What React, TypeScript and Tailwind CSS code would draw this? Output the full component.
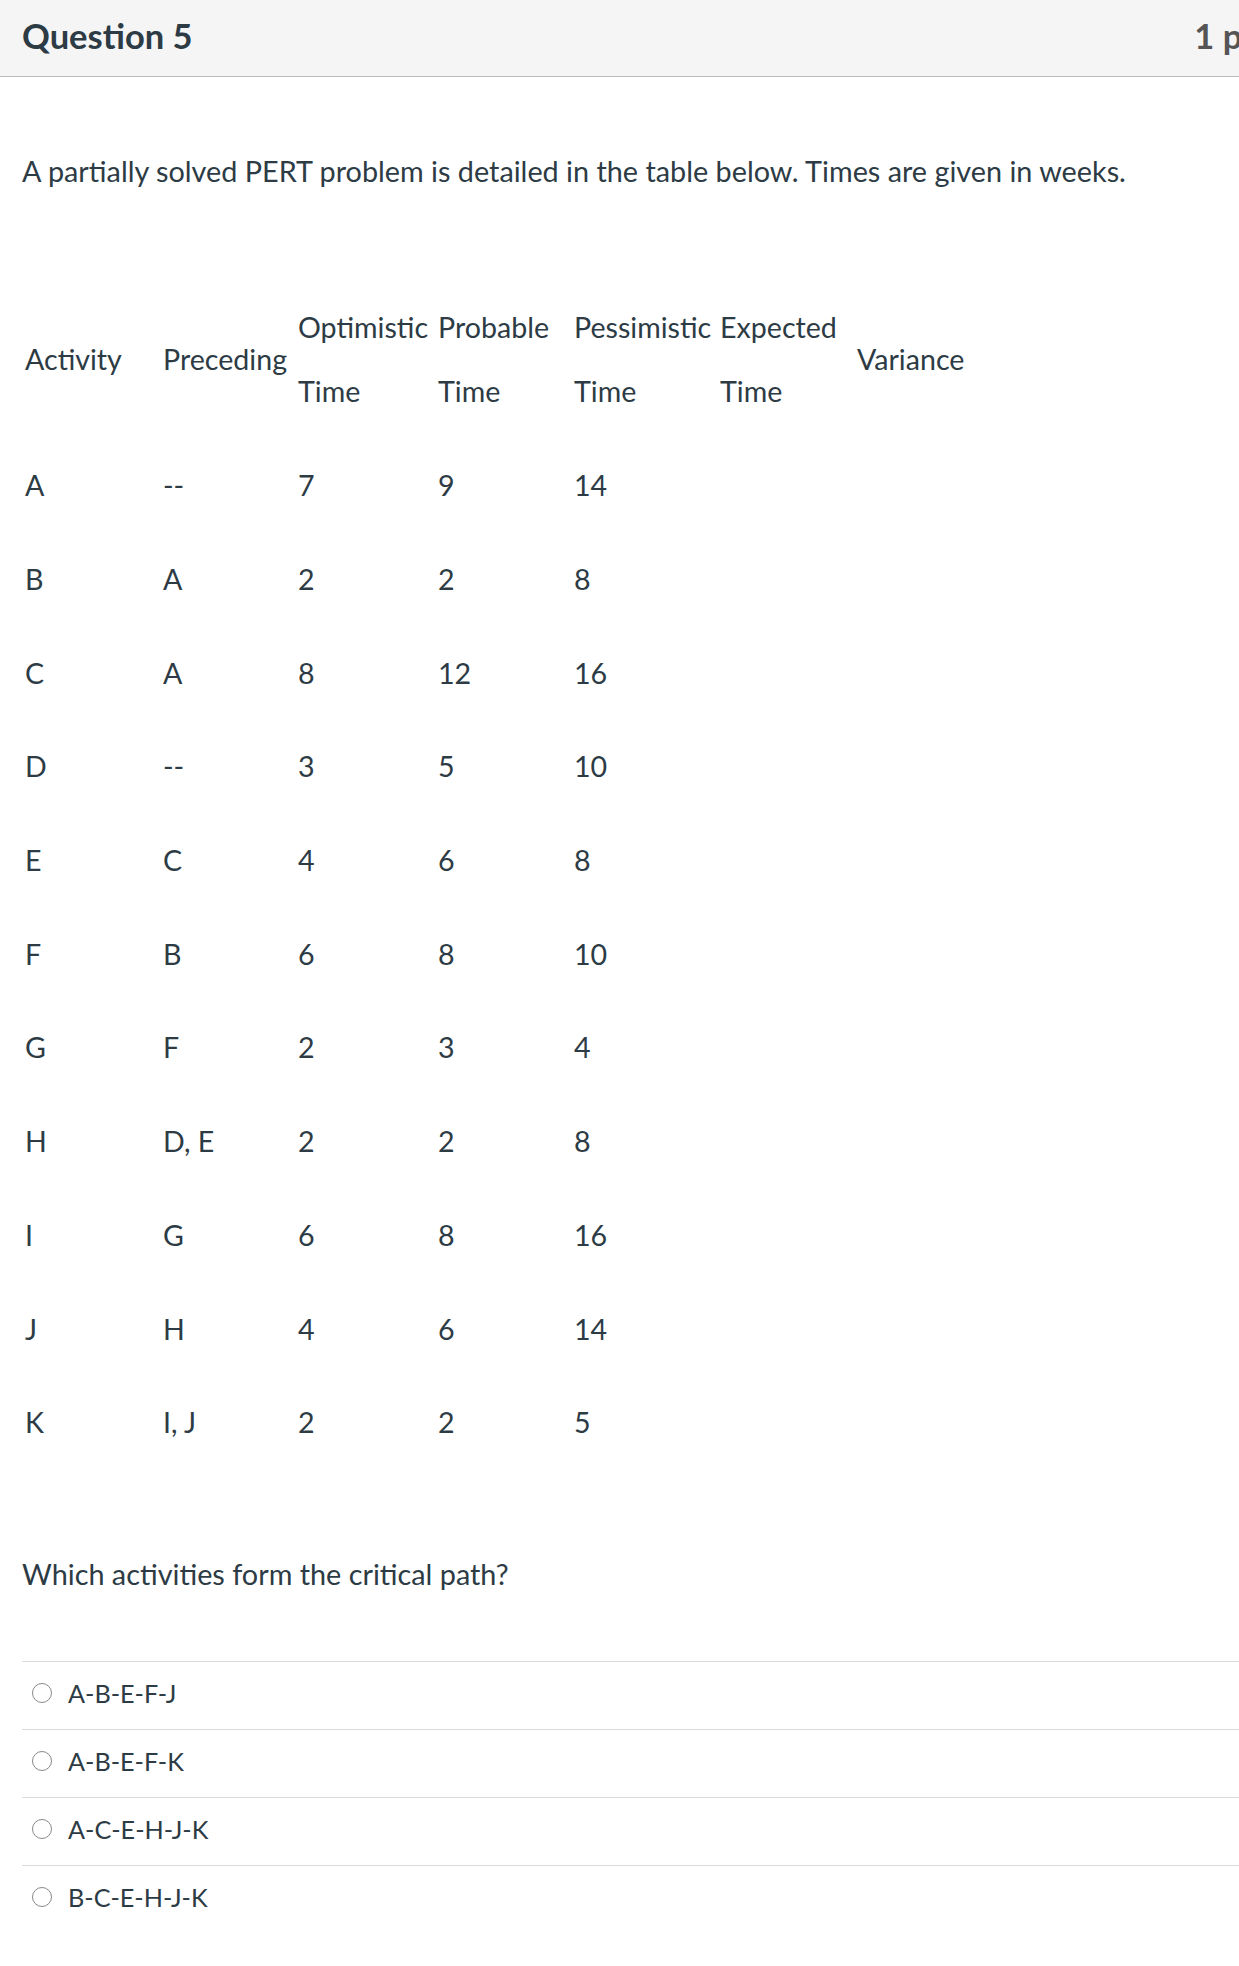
import React from "react";

const rows: string[][] = [
  ["A", "--", "7", "9", "14"],
  ["B", "A", "2", "2", "8"],
  ["C", "A", "8", "12", "16"],
  ["D", "--", "3", "5", "10"],
  ["E", "C", "4", "6", "8"],
  ["F", "B", "6", "8", "10"],
  ["G", "F", "2", "3", "4"],
  ["H", "D, E", "2", "2", "8"],
  ["I", "G", "6", "8", "16"],
  ["J", "H", "4", "6", "14"],
  ["K", "I, J", "2", "2", "5"],
];

const answers = ["A-B-E-F-J", "A-B-E-F-K", "A-C-E-H-J-K", "B-C-E-H-J-K"];

const cols = "grid grid-cols-[138px_135px_140px_136px_146px_137px_160px]";

function Two({ a, b }: { a: string; b: string }) {
  return (
    <div className="flex h-[96px] flex-col justify-between">
      <span className="leading-[32px] whitespace-nowrap">{a}</span>
      <span className="leading-[32px] whitespace-nowrap">{b}</span>
    </div>
  );
}

function One({ a }: { a: string }) {
  return (
    <div className="flex h-[96px] items-center">
      <span className="leading-[32px] whitespace-nowrap">{a}</span>
    </div>
  );
}

export default function App() {
  return (
    <div className="w-[1239px] overflow-hidden bg-white font-['Lato',sans-serif] text-[#2d3b45]">
      <div className="w-[1239px] border-b border-[#b9bdc0] bg-[#f5f5f5]">
        <div className="flex h-[76px] w-[1270px] items-center justify-between pb-[4px] pl-[22px]">
          <span className="text-[34.5px] leading-[40px] font-bold">Question 5</span>
          <span className="text-[34.5px] leading-[40px] font-bold text-[#555555]">1 pts</span>
        </div>
      </div>

      <div className="pl-[22px]">
        <p className="mt-[76px] text-[28.8px] leading-[36px]">
          A partially solved PERT problem is detailed in the table below. Times are given in weeks.
        </p>

        <div className="mt-[122px] pl-[3px] text-[28.6px]">
          <div className={cols}>
            <One a="Activity" />
            <One a="Preceding" />
            <Two a="Optimistic" b="Time" />
            <Two a="Probable" b="Time" />
            <Two a="Pessimistic" b="Time" />
            <Two a="Expected" b="Time" />
            <One a="Variance" />
          </div>
          <div className="mt-[31.5px]">
            {rows.map((r) => (
              <div key={r[0]} className={cols + " h-[93.7px] items-center"}>
                {r.map((c, i) => (
                  <span key={i} className="leading-[32px] whitespace-nowrap">
                    {c}
                  </span>
                ))}
                <span />
                <span />
              </div>
            ))}
          </div>
        </div>

        <p className="mt-[87px] text-[28.8px] leading-[36px]">Which activities form the critical path?</p>

        <div className="mt-[69px]">
          {answers.map((a) => (
            <div key={a} className="flex h-[68px] items-center border-t border-[#dadada] pb-[5px] pl-[10px]">
              <span className="mr-[16px] h-[20px] w-[20px] shrink-0 rounded-full border-[1.5px] border-[#888888]" />
              <span className="text-[25.2px] leading-[30px]">{a}</span>
            </div>
          ))}
        </div>
      </div>
    </div>
  );
}
